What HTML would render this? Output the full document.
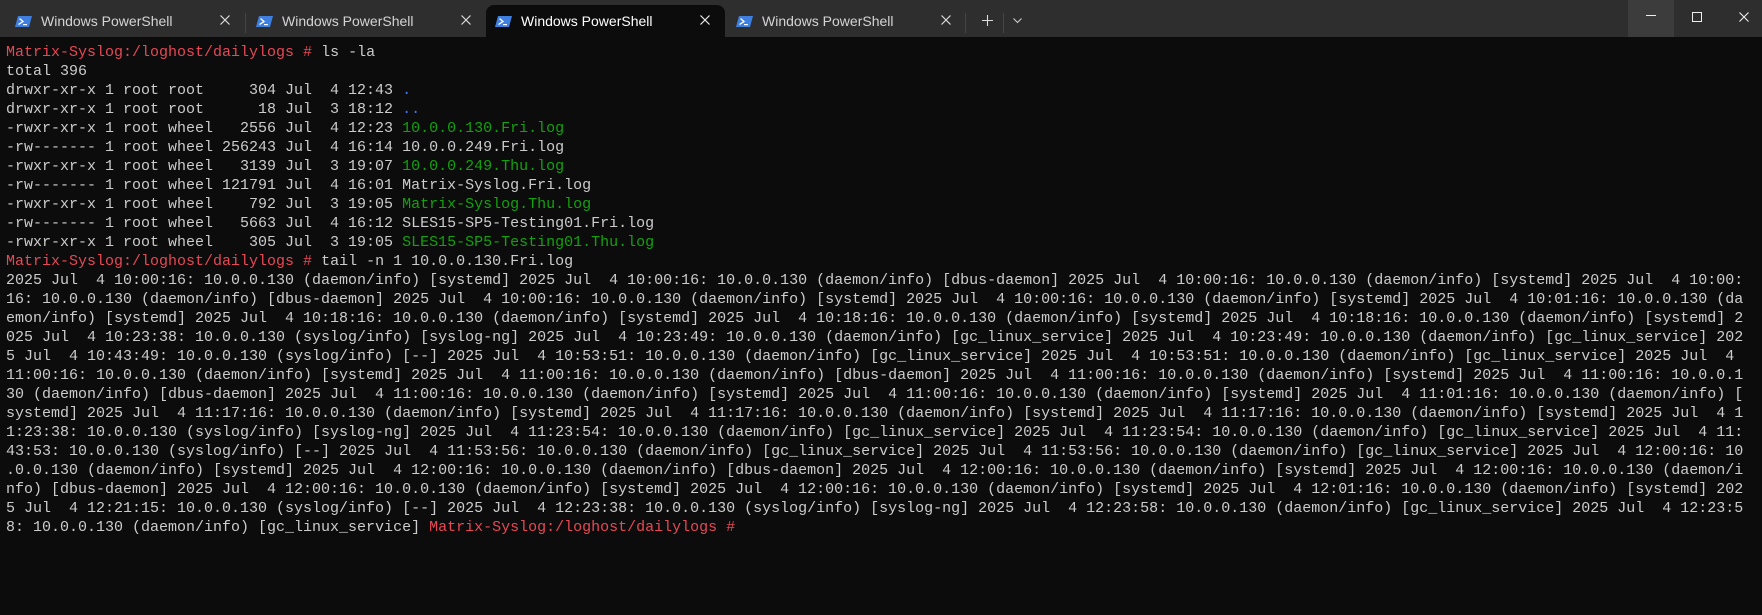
<!DOCTYPE html>
<html><head><meta charset="utf-8"><style>
*{margin:0;padding:0;box-sizing:border-box}
html,body{width:1762px;height:615px;background:#0c0c0c;overflow:hidden}
#bar{position:absolute;left:0;top:0;width:1762px;height:37px;background:#2e2e2e}
.tab{position:absolute;top:5px;height:32px;width:240px;font:14px "Liberation Sans",sans-serif;color:#d4d4d4}
.tab .ic{position:absolute;left:15px;top:11px}
.tab .t{position:absolute;left:41px;top:8px}
.tab .x{position:absolute;left:220px;top:10px}
.tab.act{background:#0c0c0c;border-radius:8px 8px 0 0;color:#fff}
.sep{position:absolute;top:13px;width:1px;height:20px;background:#454545}
pre{position:absolute;left:6px;top:43px;font:15px/19px "Liberation Mono",monospace;color:#cccccc;white-space:pre}
.r{color:#e74856}.g{color:#13a10e}.b{color:#3b78ff}
</style></head><body>
<div id="bar">
<div class="tab" style="left:0">
<svg class="ic" width="17" height="11" viewBox="0 0 17 11"><path d="M3 0H17L14 11H0Z" fill="#3f7fe0"/><path d="M4.5 2.5L8 5.5L3.5 8.5" stroke="#fff" stroke-width="1.3" fill="none"/><path d="M8 8.6H12" stroke="#fff" stroke-width="1.2"/></svg>
<span class="t">Windows PowerShell</span>
<svg class="x" width="10" height="10"><path d="M0.5 0.5L9.5 9.5M9.5 0.5L0.5 9.5" stroke="#ddd" stroke-width="1.2"/></svg></div>
<div class="sep" style="left:245px"></div>
<div class="tab" style="left:241px">
<svg class="ic" width="17" height="11" viewBox="0 0 17 11"><path d="M3 0H17L14 11H0Z" fill="#3f7fe0"/><path d="M4.5 2.5L8 5.5L3.5 8.5" stroke="#fff" stroke-width="1.3" fill="none"/><path d="M8 8.6H12" stroke="#fff" stroke-width="1.2"/></svg>
<span class="t">Windows PowerShell</span>
<svg class="x" width="10" height="10"><path d="M0.5 0.5L9.5 9.5M9.5 0.5L0.5 9.5" stroke="#ddd" stroke-width="1.2"/></svg></div>
<div class="tab act" style="left:486px;width:239px">
<svg class="ic" style="left:9px" width="17" height="11" viewBox="0 0 17 11"><path d="M3 0H17L14 11H0Z" fill="#3f7fe0"/><path d="M4.5 2.5L8 5.5L3.5 8.5" stroke="#fff" stroke-width="1.3" fill="none"/><path d="M8 8.6H12" stroke="#fff" stroke-width="1.2"/></svg>
<span class="t" style="left:35px">Windows PowerShell</span>
<svg class="x" style="left:214px" width="10" height="10"><path d="M0.5 0.5L9.5 9.5M9.5 0.5L0.5 9.5" stroke="#eee" stroke-width="1.2"/></svg></div>
<div class="tab" style="left:721px">
<svg class="ic" width="17" height="11" viewBox="0 0 17 11"><path d="M3 0H17L14 11H0Z" fill="#3f7fe0"/><path d="M4.5 2.5L8 5.5L3.5 8.5" stroke="#fff" stroke-width="1.3" fill="none"/><path d="M8 8.6H12" stroke="#fff" stroke-width="1.2"/></svg>
<span class="t">Windows PowerShell</span>
<svg class="x" width="10" height="10"><path d="M0.5 0.5L9.5 9.5M9.5 0.5L0.5 9.5" stroke="#ddd" stroke-width="1.2"/></svg></div>
<div class="sep" style="left:965px"></div>
<svg style="position:absolute;left:982px;top:15px" width="11" height="11"><path d="M5.5 0V11M0 5.5H11" stroke="#ddd" stroke-width="1.1"/></svg>
<div class="sep" style="left:1003px"></div>
<svg style="position:absolute;left:1013px;top:18px" width="9" height="6"><path d="M0.5 0.5L4.5 4.5L8.5 0.5" stroke="#ccc" stroke-width="1.1" fill="none"/></svg>
<div style="position:absolute;left:1628px;top:0;width:46px;height:37px;background:#3c3c3c"></div>
<div style="position:absolute;left:1646px;top:15px;width:10px;height:1px;background:#eee"></div>
<div style="position:absolute;left:1692px;top:12px;width:10px;height:10px;border:1px solid #eee"></div>
<svg style="position:absolute;left:1739px;top:12px" width="10" height="10"><path d="M0.5 0.5L9.5 9.5M9.5 0.5L0.5 9.5" stroke="#eee" stroke-width="1.1"/></svg>
</div>
<pre><span class="r">Matrix-Syslog:/loghost/dailylogs # </span>ls -la
total 396
drwxr-xr-x 1 root root     304 Jul  4 12:43 <span class="b">.</span>
drwxr-xr-x 1 root root      18 Jul  3 18:12 <span class="b">..</span>
-rwxr-xr-x 1 root wheel   2556 Jul  4 12:23 <span class="g">10.0.0.130.Fri.log</span>
-rw------- 1 root wheel 256243 Jul  4 16:14 10.0.0.249.Fri.log
-rwxr-xr-x 1 root wheel   3139 Jul  3 19:07 <span class="g">10.0.0.249.Thu.log</span>
-rw------- 1 root wheel 121791 Jul  4 16:01 Matrix-Syslog.Fri.log
-rwxr-xr-x 1 root wheel    792 Jul  3 19:05 <span class="g">Matrix-Syslog.Thu.log</span>
-rw------- 1 root wheel   5663 Jul  4 16:12 SLES15-SP5-Testing01.Fri.log
-rwxr-xr-x 1 root wheel    305 Jul  3 19:05 <span class="g">SLES15-SP5-Testing01.Thu.log</span>
<span class="r">Matrix-Syslog:/loghost/dailylogs # </span>tail -n 1 10.0.0.130.Fri.log
2025 Jul  4 10:00:16: 10.0.0.130 (daemon/info) [systemd] 2025 Jul  4 10:00:16: 10.0.0.130 (daemon/info) [dbus-daemon] 2025 Jul  4 10:00:16: 10.0.0.130 (daemon/info) [systemd] 2025 Jul  4 10:00:
16: 10.0.0.130 (daemon/info) [dbus-daemon] 2025 Jul  4 10:00:16: 10.0.0.130 (daemon/info) [systemd] 2025 Jul  4 10:00:16: 10.0.0.130 (daemon/info) [systemd] 2025 Jul  4 10:01:16: 10.0.0.130 (da
emon/info) [systemd] 2025 Jul  4 10:18:16: 10.0.0.130 (daemon/info) [systemd] 2025 Jul  4 10:18:16: 10.0.0.130 (daemon/info) [systemd] 2025 Jul  4 10:18:16: 10.0.0.130 (daemon/info) [systemd] 2
025 Jul  4 10:23:38: 10.0.0.130 (syslog/info) [syslog-ng] 2025 Jul  4 10:23:49: 10.0.0.130 (daemon/info) [gc_linux_service] 2025 Jul  4 10:23:49: 10.0.0.130 (daemon/info) [gc_linux_service] 202
5 Jul  4 10:43:49: 10.0.0.130 (syslog/info) [--] 2025 Jul  4 10:53:51: 10.0.0.130 (daemon/info) [gc_linux_service] 2025 Jul  4 10:53:51: 10.0.0.130 (daemon/info) [gc_linux_service] 2025 Jul  4 
11:00:16: 10.0.0.130 (daemon/info) [systemd] 2025 Jul  4 11:00:16: 10.0.0.130 (daemon/info) [dbus-daemon] 2025 Jul  4 11:00:16: 10.0.0.130 (daemon/info) [systemd] 2025 Jul  4 11:00:16: 10.0.0.1
30 (daemon/info) [dbus-daemon] 2025 Jul  4 11:00:16: 10.0.0.130 (daemon/info) [systemd] 2025 Jul  4 11:00:16: 10.0.0.130 (daemon/info) [systemd] 2025 Jul  4 11:01:16: 10.0.0.130 (daemon/info) [
systemd] 2025 Jul  4 11:17:16: 10.0.0.130 (daemon/info) [systemd] 2025 Jul  4 11:17:16: 10.0.0.130 (daemon/info) [systemd] 2025 Jul  4 11:17:16: 10.0.0.130 (daemon/info) [systemd] 2025 Jul  4 1
1:23:38: 10.0.0.130 (syslog/info) [syslog-ng] 2025 Jul  4 11:23:54: 10.0.0.130 (daemon/info) [gc_linux_service] 2025 Jul  4 11:23:54: 10.0.0.130 (daemon/info) [gc_linux_service] 2025 Jul  4 11:
43:53: 10.0.0.130 (syslog/info) [--] 2025 Jul  4 11:53:56: 10.0.0.130 (daemon/info) [gc_linux_service] 2025 Jul  4 11:53:56: 10.0.0.130 (daemon/info) [gc_linux_service] 2025 Jul  4 12:00:16: 10
.0.0.130 (daemon/info) [systemd] 2025 Jul  4 12:00:16: 10.0.0.130 (daemon/info) [dbus-daemon] 2025 Jul  4 12:00:16: 10.0.0.130 (daemon/info) [systemd] 2025 Jul  4 12:00:16: 10.0.0.130 (daemon/i
nfo) [dbus-daemon] 2025 Jul  4 12:00:16: 10.0.0.130 (daemon/info) [systemd] 2025 Jul  4 12:00:16: 10.0.0.130 (daemon/info) [systemd] 2025 Jul  4 12:01:16: 10.0.0.130 (daemon/info) [systemd] 202
5 Jul  4 12:21:15: 10.0.0.130 (syslog/info) [--] 2025 Jul  4 12:23:38: 10.0.0.130 (syslog/info) [syslog-ng] 2025 Jul  4 12:23:58: 10.0.0.130 (daemon/info) [gc_linux_service] 2025 Jul  4 12:23:5
8: 10.0.0.130 (daemon/info) [gc_linux_service] <span class="r">Matrix-Syslog:/loghost/dailylogs # </span></pre>
</body></html>
